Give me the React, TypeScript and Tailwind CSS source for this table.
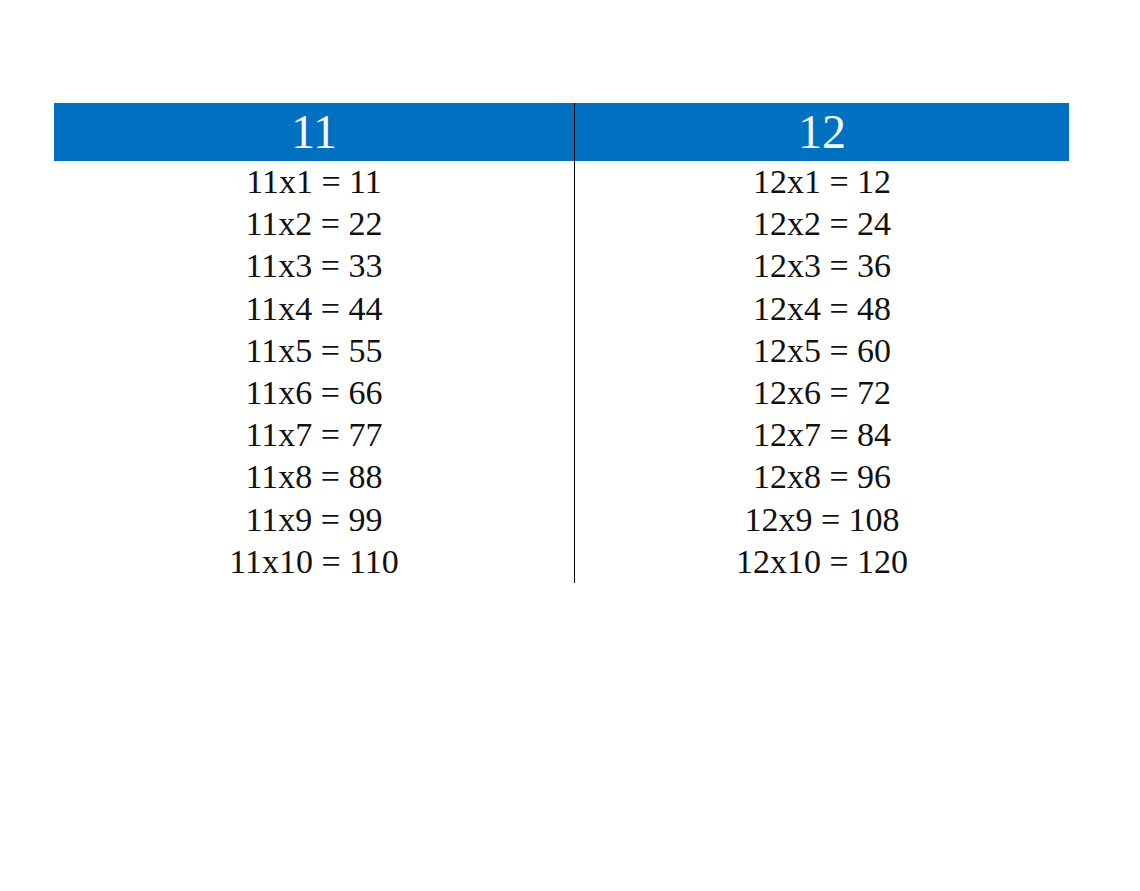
import React from 'react';

const tables = [11, 12];
const steps = [1, 2, 3, 4, 5, 6, 7, 8, 9, 10];

function Column({ base, last }: { base: number; last?: boolean }) {
  return (
    <div className={last ? 'flex flex-col' : 'flex flex-col border-r border-black'}>
      <div className="flex h-[58px] items-center justify-center bg-[#0070c0] text-[48px] leading-none text-[#f4f8ff]">
        {base}
      </div>
      {steps.map((n) => (
        <div key={n} className="flex h-[42.2px] items-center justify-center text-[34px] leading-none text-[#111]">
          {base}x{n} = {base * n}
        </div>
      ))}
    </div>
  );
}

export default function App() {
  return (
    <div className="min-h-[891px] w-[1140px] bg-white pt-[103px] pl-[54px]" style={{ fontFamily: '"Liberation Serif", "DejaVu Serif", serif' }}>
      <div className="grid w-[1015px] grid-cols-[521px_494px]">
        {tables.map((t, i) => (
          <Column key={t} base={t} last={i === tables.length - 1} />
        ))}
      </div>
    </div>
  );
}
